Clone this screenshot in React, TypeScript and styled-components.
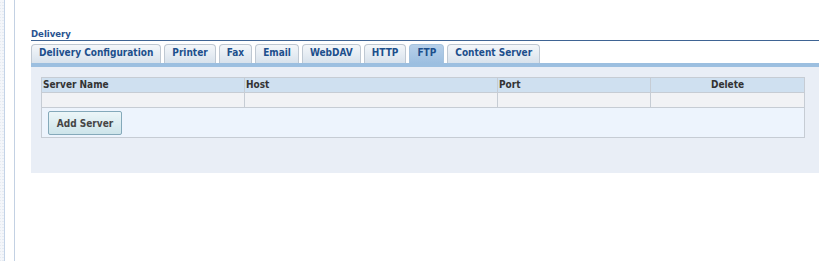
import styled, { createGlobalStyle } from "styled-components";

const GlobalStyle = createGlobalStyle`
  html, body {
    margin: 0;
    padding: 0;
    background: #ffffff;
    font-family: "DejaVu Sans Condensed", "DejaVu Sans", Verdana, sans-serif;
  }
`;

const tabs = [
  "Delivery Configuration",
  "Printer",
  "Fax",
  "Email",
  "WebDAV",
  "HTTP",
  "FTP",
  "Content Server",
];

const columns = [
  { label: "Server Name", width: 203, align: "left" },
  { label: "Host", width: 253, align: "left" },
  { label: "Port", width: 153, align: "left" },
  { label: "Delete", width: 154, align: "center" },
];

const App = () => {
  return (
    <>
      <GlobalStyle />
      <Page>
        <Gutter />
        <Content>
          <SectionTitle>Delivery</SectionTitle>
          <TabBar>
            {tabs.map((t) => (
              <Tab key={t} $active={t === "FTP"}>
                {t}
              </Tab>
            ))}
          </TabBar>
          <Panel>
            <Table>
              <colgroup>
                {columns.map((c) => (
                  <col key={c.label} style={{ width: c.width }} />
                ))}
              </colgroup>
              <thead>
                <tr>
                  {columns.map((c) => (
                    <HeadCell key={c.label} $align={c.align}>
                      {c.label}
                    </HeadCell>
                  ))}
                </tr>
              </thead>
              <tbody>
                <tr>
                  {columns.map((c) => (
                    <EmptyCell key={c.label} />
                  ))}
                </tr>
                <tr>
                  <ButtonCell colSpan={4}>
                    <AddButton>Add Server</AddButton>
                  </ButtonCell>
                </tr>
              </tbody>
            </Table>
          </Panel>
        </Content>
      </Page>
    </>
  );
};
export default App;

const font = `"DejaVu Sans Condensed", "DejaVu Sans", sans-serif`;

const Page = styled.div`
  display: flex;
  width: 819px;
  height: 261px;
  overflow: hidden;
`;

const Gutter = styled.div`
  width: 4px;
  flex: none;
  background-color: #f4f6fa;
  background-image: linear-gradient(45deg, #e6ebf2 25%, transparent 25%),
    linear-gradient(-45deg, #e6ebf2 25%, transparent 25%);
  background-size: 3px 3px;
  border-right: 1px solid #c3d3e8;
  position: relative;
  &::after {
    content: "";
    position: absolute;
    left: 14px;
    top: 0;
    bottom: 0;
    width: 1px;
    background: #c3d1e3;
  }
`;

const Content = styled.div`
  flex: 1;
  padding: 28px 0 0 26px;
  display: flex;
  flex-direction: column;
`;

const SectionTitle = styled.div`
  font: 700 9.5px ${font};
  color: #2a5390;
  height: 11px;
  line-height: 11px;
  border-bottom: 1px solid #3f6494;
  padding-bottom: 1px;
`;

const TabBar = styled.div`
  display: flex;
  gap: 3px;
  margin-top: 3px;
  height: 19px;
  border-bottom: 4px solid #9cbfe0;
  align-items: flex-end;
`;

const Tab = styled.div<{ $active?: boolean }>`
  height: 16px;
  line-height: 18px;
  padding: 2px 7px 0;
  border: 1px solid ${(p) => (p.$active ? "#a6c3de" : "#bfc8d2")};
  border-bottom: none;
  border-radius: 4px 4px 0 0;
  background: ${(p) =>
    p.$active
      ? "linear-gradient(#b7d0e9, #9dbfe0)"
      : "linear-gradient(#f4f7fa, #d8e2ec)"};
  font: 700 10px ${font};
  color: #1d4f8c;
  white-space: nowrap;
  overflow: hidden;
`;

const Panel = styled.div`
  background: #e9eef6;
  height: 106px;
  padding: 10px 15px 0 10px;
  box-sizing: border-box;
`;

const Table = styled.table`
  border-collapse: collapse;
  table-layout: fixed;
  width: 764px;
  border: 1px solid #c6ccd4;
`;

const HeadCell = styled.th<{ $align: string }>`
  height: 14px;
  padding: 0 1px;
  background: #cfe0f0;
  border: 1px solid #c6ccd4;
  text-align: ${(p) => p.$align};
  font: 700 10px ${font};
  color: #333333;
  line-height: 14px;
`;

const EmptyCell = styled.td`
  height: 14px;
  padding: 0;
  background: #f1f2f5;
  border: 1px solid #c6ccd4;
`;

const ButtonCell = styled.td`
  height: 29px;
  padding: 3px 6px 2px;
  background: #edf4fd;
  border: 1px solid #c6ccd4;
  box-sizing: border-box;
`;

const AddButton = styled.button`
  display: block;
  height: 24px;
  width: 74px;
  padding: 0;
  border: 1px solid #84a9ba;
  border-radius: 2px;
  background: linear-gradient(#ecf6f8, #cde4ea);
  font: 700 10px ${font};
  color: #454545;
`;
